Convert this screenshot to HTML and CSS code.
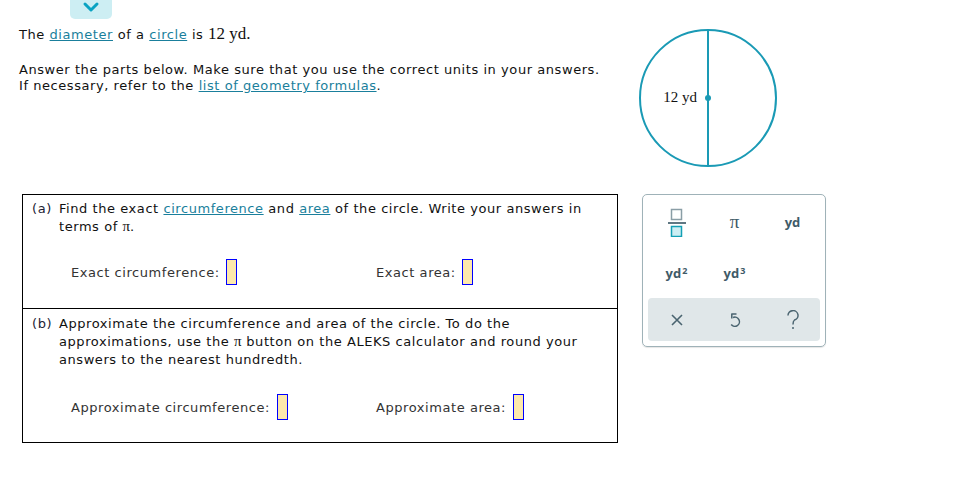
FILE: index.html
```html
<!DOCTYPE html>
<html>
<head>
<meta charset="utf-8">
<link rel="stylesheet" href="styles.css">
</head>
<body>
<div class="tab">
  <svg width="18" height="12" viewBox="0 0 18 12"><path d="M3 3 L9 9 L15 3" fill="none" stroke="#0aa3c2" stroke-width="3" stroke-linecap="round" stroke-linejoin="round"/></svg>
</div>
<div class="top">
  <div class="intro">
    <p class="given">The <a>diameter</a> of a <a>circle</a> is <span class="math">12 yd.</span></p>
    <p class="instr">Answer the parts below. Make sure that you use the correct units in your answers.<br>If necessary, refer to the <a>list of geometry formulas</a>.</p>
  </div>
  <svg class="figure" width="144" height="144" viewBox="0 0 144 144">
    <circle cx="72" cy="72" r="68" fill="none" stroke="#1a9ab5" stroke-width="2"/>
    <line x1="72" y1="4" x2="72" y2="140" stroke="#1a9ab5" stroke-width="2"/>
    <circle cx="72" cy="72" r="3" fill="#1a9ab5"/>
    <text x="61" y="76" text-anchor="end" class="flabel">12 yd</text>
  </svg>
</div>
<div class="bottom">
  <div class="parts">
    <div class="part part-a">
      <div class="q"><div class="lbl">(a)</div><div class="qt">Find the exact <a>circumference</a> and <a>area</a> of the circle. Write your answers in<br>terms of <span class="pi">π</span>.</div></div>
      <div class="answers">
        <div class="ans">Exact circumference: <span class="box"></span></div>
        <div class="ans">Exact area: <span class="box"></span></div>
      </div>
    </div>
    <div class="part part-b">
      <div class="q"><div class="lbl">(b)</div><div class="qt">Approximate the circumference and area of the circle. To do the<br>approximations, use the <span class="pi">π</span> button on the ALEKS calculator and round your<br>answers to the nearest hundredth.</div></div>
      <div class="answers">
        <div class="ans">Approximate circumference: <span class="box"></span></div>
        <div class="ans">Approximate area: <span class="box"></span></div>
      </div>
    </div>
  </div>
  <div class="calc">
    <div class="keys">
      <div class="key">
        <svg width="18" height="30" viewBox="0 0 18 30"><rect x="3.5" y="2.5" width="10" height="10" fill="#fff" stroke="#8a9ea6" stroke-width="1.5"/><rect x="0" y="15" width="18" height="2" fill="#5f7782"/><rect x="3.5" y="19.5" width="10" height="10" fill="#cdeef3" stroke="#14a0b5" stroke-width="1.5"/></svg>
      </div>
      <div class="key pikey">π</div>
      <div class="key">yd</div>
      <div class="key">yd<sup>2</sup></div>
      <div class="key">yd<sup>3</sup></div>
      <div class="key"></div>
    </div>
    <div class="tools">
      <div class="tool"><svg width="14" height="14" viewBox="0 0 14 14"><path d="M2 2 L12 12 M12 2 L2 12" stroke="#4a6470" stroke-width="1.6" fill="none"/></svg></div>
      <div class="tool"><svg width="14" height="18" viewBox="0 0 14 18"><path d="M5 6.5 A4.6 4.6 0 1 1 3.2 13.5" fill="none" stroke="#4a6470" stroke-width="1.5"/><path d="M8.5 3 L3.8 3 L3.8 7.5" fill="none" stroke="#4a6470" stroke-width="1.5" stroke-linejoin="round"/></svg></div>
      <div class="tool"><svg width="14" height="20" viewBox="0 0 14 20"><path d="M2 5.5 A5 4.8 0 1 1 8.5 10 C7 11 7 12 7 14.5" fill="none" stroke="#4a6470" stroke-width="1.5"/><circle cx="7" cy="18" r="1" fill="#4a6470"/></svg></div>
    </div>
  </div>
</div>
</body>
</html>
```
FILE: styles.css
```css
body {
  margin: 0;
  font-family: "DejaVu Sans", Verdana, sans-serif;
  font-size: 13px;
  letter-spacing: 0.56px;
  color: #111;
  background: #fff;
}
a {
  color: #1a7f9c;
  text-decoration: underline;
}
p { margin: 0; }
.tab {
  margin-left: 70px;
  width: 42px;
  height: 19px;
  background: #cdeef3;
  border-radius: 0 0 5px 5px;
  display: flex;
  justify-content: center;
  padding-top: 1px;
  box-sizing: border-box;
}
.top {
  display: flex;
  height: 175px;
}
.intro {
  width: 619px;
  padding-left: 19px;
  box-sizing: border-box;
}
.given {
  line-height: 16px;
  margin-top: 7px;
}
.math {
  font-family: "Liberation Serif", "Times New Roman", serif;
  font-size: 17px;
  letter-spacing: 0;
}
.instr {
  line-height: 16px;
  margin-top: 19px;
}
.figure {
  margin-top: 7px;
  margin-left: 17px;
}
.flabel {
  font-family: "Liberation Serif", serif;
  font-size: 15px;
  letter-spacing: 0;
  fill: #111;
}
.bottom {
  display: flex;
  align-items: flex-start;
}
.parts {
  margin-left: 22px;
  width: 596px;
  border: 1px solid #000;
  box-sizing: border-box;
}
.part-a {
  height: 114px;
  padding: 5px 0 0 9px;
  box-sizing: border-box;
  border-bottom: 1px solid #000;
}
.part-b {
  height: 133px;
  padding: 6px 0 0 9px;
  box-sizing: border-box;
}
.q {
  display: flex;
  line-height: 18px;
}
.lbl {
  width: 27px;
  flex: none;
  color: #223;
}
.qt { width: 540px; white-space: nowrap; }
.pi {
  font-family: "Liberation Serif", serif;
  font-size: 15px;
  letter-spacing: 0;
  line-height: 1;
}
.answers {
  display: grid;
  grid-template-columns: 305px auto;
  padding-left: 39px;
  margin-top: 23px;
}
.part-b .answers { margin-top: 25px; }
.ans {
  display: flex;
  align-items: center;
  color: #333;
  white-space: pre;
}
.box {
  display: inline-block;
  width: 11px;
  height: 26px;
  box-sizing: border-box;
  border: 1px solid #0000ff;
  background: #fde9ac;
  margin-left: 2px;
}
.calc {
  margin-left: 24px;
  width: 184px;
  height: 153px;
  border: 1px solid #9fb2b8;
  border-radius: 5px;
  box-sizing: border-box;
  padding: 0 5px 5px 5px;
  display: flex;
  flex-direction: column;
  box-shadow: 0 1px 1px rgba(0,0,0,0.1);
  letter-spacing: 0;
}
.keys {
  display: grid;
  grid-template-columns: 57px 59px 57px;
  grid-template-rows: 52px 50px;
  padding-top: 1px;
}
.key {
  display: flex;
  align-items: center;
  justify-content: center;
  font-family: "Open Sans", "DejaVu Sans", sans-serif;
  font-weight: 700;
  font-size: 13px;
  color: #3f5b68;
}
.key sup {
  font-size: 9px;
  line-height: 1;
  align-self: flex-start;
  margin-top: 18px;
  margin-left: 1px;
}
.pikey {
  font-family: "Liberation Serif", serif;
  font-weight: 400;
  font-size: 19px;
}
.tools {
  background: #e0e7e9;
  border-radius: 4px;
  height: 44px;
  display: grid;
  grid-template-columns: 57px 59px 57px;
}
.tool {
  display: flex;
  align-items: center;
  justify-content: center;
}
```
